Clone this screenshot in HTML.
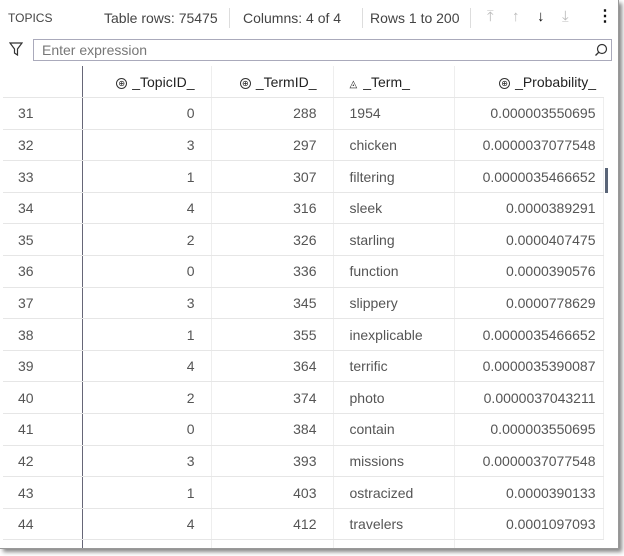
<!DOCTYPE html>
<html><head><style>
*{margin:0;padding:0;box-sizing:border-box}
body{width:624px;height:556px;background:#fff;font-family:"Liberation Sans",sans-serif;color:#333;position:relative;overflow:hidden}
.frame{position:absolute;left:0;top:0;width:619px;height:549px;background:#fff;border-right:1px solid #999;border-bottom:1px solid #999;box-shadow:3px 3px 4px #888}
.top{position:absolute;top:0;left:0;height:36px;width:619px;font-size:14px;color:#444}
.top span{position:absolute;top:10px}
.sep{position:absolute;top:8px;width:1px;height:20px;background:#ddd}
.search{position:absolute;left:33px;top:39px;width:579px;height:22px;border:1px solid #aab;font-size:14px;color:#777;padding:2px 8px}
table{position:absolute;left:3px;top:66px;border-collapse:collapse;font-size:14px;color:#555}
td,th{height:31.6px;border-bottom:1px solid #e6e6e6;border-right:1px solid #eee;padding:0 16px 0 10px;white-space:nowrap}
th{font-weight:normal;color:#222;text-align:right;border-bottom:1px solid #e6e6e6}
td.n{text-align:left;padding-left:15px;border-right:1px solid #667}
th.n{border-right:1px solid #667}
td.r{text-align:right}
td.t{text-align:left;padding-left:16px}
td.p{padding-right:7px}
th.p{padding-right:7px}
.ic{display:inline-block;width:11px;height:11px;border:1px solid #333;border-radius:50%;font-size:8px;line-height:9px;text-align:center;margin-right:5px;vertical-align:1px}
</style></head><body>
<div class="frame">
<div class="top">
<span style="left:8px;font-size:12px;top:11px">TOPICS</span>
<span style="left:104px">Table rows: 75475</span>
<div class="sep" style="left:229px"></div>
<span style="left:243px">Columns: 4 of 4</span>
<div class="sep" style="left:362px"></div>
<span style="left:370px">Rows 1 to 200</span>
<div class="sep" style="left:470px"></div>
<span style="left:487px;color:#bbb;top:8px;font-size:15px">⤒</span>
<span style="left:512px;color:#bbb;top:8px;font-size:15px">↑</span>
<span style="left:537px;color:#111;top:8px;font-weight:bold;font-size:15px">↓</span>
<span style="left:562px;color:#bbb;top:8px;font-size:15px">⤓</span>
<span style="left:597px;color:#111;top:6px;font-weight:bold;font-size:16px">⋮</span>
</div>
<svg style="position:absolute;left:9px;top:42px" width="14" height="14" viewBox="0 0 14 14"><path d="M1 1H13L8.5 7V13L5.5 11V7Z" fill="none" stroke="#333" stroke-width="1.2"/></svg>
<div class="search">Enter expression</div>
<svg style="position:absolute;left:594px;top:43px" width="14" height="14" viewBox="0 0 14 14"><circle cx="8" cy="6" r="4.5" fill="none" stroke="#333" stroke-width="1.2"/><path d="M5 9L1.5 12.5" stroke="#333" stroke-width="1.3"/></svg>
<div style="position:absolute;left:605px;top:168px;width:3px;height:25px;background:#5a6578"></div>
<table>
<tr><th class="n" style="width:79px"></th><th style="width:129px"><span class="ic">⊕</span>_TopicID_</th><th style="width:122px"><span class="ic">⊕</span>_TermID_</th><th style="width:121px;text-align:left;padding-left:16px"><span style="font-size:10px;margin-right:6px">◬</span>_Term_</th><th class="p" style="width:149px;border-right:none"><span class="ic">⊕</span>_Probability_</th></tr>
<tr><td class="n">31</td><td class="r">0</td><td class="r">288</td><td class="t">1954</td><td class="r p">0.000003550695</td></tr>
<tr><td class="n">32</td><td class="r">3</td><td class="r">297</td><td class="t">chicken</td><td class="r p">0.0000037077548</td></tr>
<tr><td class="n">33</td><td class="r">1</td><td class="r">307</td><td class="t">filtering</td><td class="r p">0.0000035466652</td></tr>
<tr><td class="n">34</td><td class="r">4</td><td class="r">316</td><td class="t">sleek</td><td class="r p">0.0000389291</td></tr>
<tr><td class="n">35</td><td class="r">2</td><td class="r">326</td><td class="t">starling</td><td class="r p">0.0000407475</td></tr>
<tr><td class="n">36</td><td class="r">0</td><td class="r">336</td><td class="t">function</td><td class="r p">0.0000390576</td></tr>
<tr><td class="n">37</td><td class="r">3</td><td class="r">345</td><td class="t">slippery</td><td class="r p">0.0000778629</td></tr>
<tr><td class="n">38</td><td class="r">1</td><td class="r">355</td><td class="t">inexplicable</td><td class="r p">0.0000035466652</td></tr>
<tr><td class="n">39</td><td class="r">4</td><td class="r">364</td><td class="t">terrific</td><td class="r p">0.0000035390087</td></tr>
<tr><td class="n">40</td><td class="r">2</td><td class="r">374</td><td class="t">photo</td><td class="r p">0.0000037043211</td></tr>
<tr><td class="n">41</td><td class="r">0</td><td class="r">384</td><td class="t">contain</td><td class="r p">0.000003550695</td></tr>
<tr><td class="n">42</td><td class="r">3</td><td class="r">393</td><td class="t">missions</td><td class="r p">0.0000037077548</td></tr>
<tr><td class="n">43</td><td class="r">1</td><td class="r">403</td><td class="t">ostracized</td><td class="r p">0.0000390133</td></tr>
<tr><td class="n">44</td><td class="r">4</td><td class="r">412</td><td class="t">travelers</td><td class="r p">0.0001097093</td></tr>
<tr><td class="n" style="height:8px;border-bottom:none"></td><td style="height:8px;border-bottom:none"></td><td style="height:8px;border-bottom:none"></td><td style="height:8px;border-bottom:none"></td><td style="height:8px;border-bottom:none;border-right:none"></td></tr>
</table>
</div>
</body></html>
